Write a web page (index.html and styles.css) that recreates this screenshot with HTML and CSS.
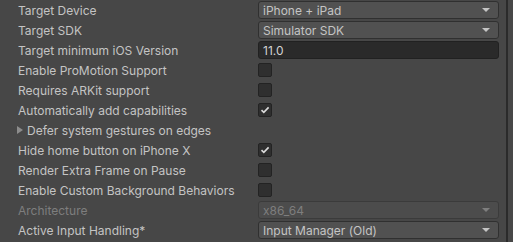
FILE: index.html
```html
<!DOCTYPE html>
<html>

<head>
  <link rel="stylesheet" href="styles.css">
</head>

<body>
  <div class="panel">
    <div class="list">
      <div class="row">
        <label>Target Device</label>
        <div class="popup"><span>iPhone + iPad</span><i class="arrow"></i></div>
      </div>
      <div class="row">
        <label>Target SDK</label>
        <div class="popup"><span>Simulator SDK</span><i class="arrow"></i></div>
      </div>
      <div class="row">
        <label>Target minimum iOS Version</label>
        <div class="textfield">11.0</div>
      </div>
      <div class="row">
        <label>Enable ProMotion Support</label>
        <div class="toggle"></div>
      </div>
      <div class="row">
        <label>Requires ARKit support</label>
        <div class="toggle"></div>
      </div>
      <div class="row">
        <label>Automatically add capabilities</label>
        <div class="toggle checked"><svg width="14" height="14" viewBox="0 0 14 14"><path d="M3.5 7.2 L5.8 9.4 L10.6 4.4" fill="none" stroke="#dcdcdc" stroke-width="1.6"/></svg></div>
      </div>
      <div class="row foldout">
        <i class="fold"></i>
        <label>Defer system gestures on edges</label>
      </div>
      <div class="row">
        <label>Hide home button on iPhone X</label>
        <div class="toggle checked"><svg width="14" height="14" viewBox="0 0 14 14"><path d="M3.5 7.2 L5.8 9.4 L10.6 4.4" fill="none" stroke="#dcdcdc" stroke-width="1.6"/></svg></div>
      </div>
      <div class="row">
        <label>Render Extra Frame on Pause</label>
        <div class="toggle"></div>
      </div>
      <div class="row">
        <label>Enable Custom Background Behaviors</label>
        <div class="toggle"></div>
      </div>
      <div class="row disabled">
        <label>Architecture</label>
        <div class="popup"><span>x86_64</span><i class="arrow"></i></div>
      </div>
      <div class="row">
        <label>Active Input Handling*</label>
        <div class="popup"><span>Input Manager (Old)</span><i class="arrow"></i></div>
      </div>
    </div>
    <div class="scrollbar"></div>
  </div>
</body>

</html>
```

FILE: styles.css
```css
body {
  margin: 0;
  background: #474747;
  font-family: Inter, 'Noto Sans', sans-serif;
  font-size: 12px;
  color: #c4c4c4;
}

.panel {
  display: flex;
  height: 242px;
}

.list {
  width: 506px;
  padding-left: 18px;
  box-sizing: border-box;
}

.row {
  display: flex;
  align-items: center;
  height: 20px;
}

.row label {
  width: 240px;
  flex: none;
  white-space: nowrap;
}

.popup,
.textfield {
  width: 241px;
  height: 18px;
  box-sizing: border-box;
  border-radius: 3px;
  display: flex;
  align-items: center;
  padding-left: 4px;
}

.popup {
  background: #515151;
  border: 1px solid #303030;
  justify-content: space-between;
  padding-right: 8px;
}

.popup .arrow {
  width: 0;
  height: 0;
  border-left: 4px solid transparent;
  border-right: 4px solid transparent;
  border-top: 4px solid #c4c4c4;
}

.textfield {
  background: #2a2a2a;
  border: 1px solid #212121;
  color: #d2d2d2;
}

.toggle {
  width: 14px;
  height: 14px;
  box-sizing: border-box;
  background: #2f2f2f;
  border: 1px solid #232323;
  border-radius: 2px;
  display: flex;
  align-items: center;
  justify-content: center;
}

.toggle svg {
  flex: none;
}

.foldout .fold {
  width: 0;
  height: 0;
  margin-left: -1px;
  margin-right: 4px;
  border-top: 4px solid transparent;
  border-bottom: 4px solid transparent;
  border-left: 6px solid #8c8c8c;
}

.disabled label,
.disabled .popup {
  color: #7e7e7e;
}

.disabled .popup {
  background: #4c4c4c;
  border-color: #3b3b3b;
}

.disabled .popup .arrow {
  border-top-color: #7e7e7e;
}

.scrollbar {
  width: 2px;
  background: #2b2b2b;
}
```
